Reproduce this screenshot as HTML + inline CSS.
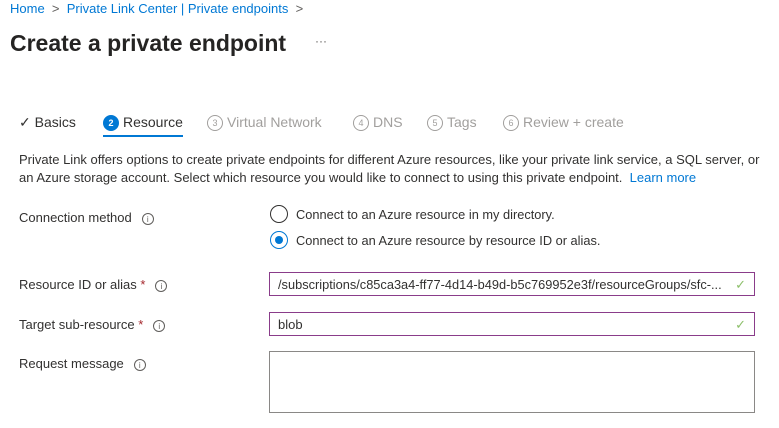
<!DOCTYPE html><html><head><style>
body{margin:0;width:779px;height:428px;background:#fff;font-family:"Liberation Sans",sans-serif;color:#323130;position:relative;overflow:hidden}
.a{position:absolute;white-space:nowrap}
.blue{color:#0078d4}
.g{color:#a19f9d}
.c{display:inline-block;width:16px;height:16px;border:1px solid #a19f9d;border-radius:50%;font-size:9px;text-align:center;line-height:15px;vertical-align:1px;margin-right:4px;box-sizing:border-box}
.i{display:inline-block;width:12px;height:12px;border:1px solid #605e5c;border-radius:50%;font-size:8px;text-align:center;line-height:11px;box-sizing:border-box;color:#605e5c;margin-left:10px;vertical-align:0}
.box{position:absolute;left:269px;width:486px;border:1px solid #8a3c8a;box-sizing:border-box;background:#fff}
.ck{position:absolute;right:8px;top:4px;color:#8cbf6a;font-size:13px}
.rad{position:absolute;width:18px;height:18px;border:1px solid #323130;border-radius:50%;box-sizing:border-box}
.req{color:#a4262c}
</style></head><body>
<div class="a blue" style="left:10px;top:1px;font-size:13px">Home <span style="color:#605e5c">&nbsp;&gt;&nbsp;</span> Private Link Center | Private endpoints <span style="color:#605e5c">&nbsp;&gt;</span></div>
<div class="a" style="left:10px;top:30px;font-size:23px;font-weight:bold;color:#252423">Create a private endpoint</div>
<div class="a" style="left:315px;top:34px;font-size:12px;color:#605e5c">···</div>
<div class="a" style="left:19px;top:114px;font-size:14px">✓ Basics</div>
<div class="a" style="left:103px;top:114px;font-size:14px"><span class="c" style="background:#0078d4;border-color:#0078d4;color:#fff;font-weight:bold">2</span>Resource</div>
<div class="a" style="left:103px;top:135px;width:80px;height:2px;background:#0078d4"></div>
<div class="a g" style="left:207px;top:114px;font-size:14px"><span class="c">3</span>Virtual Network</div>
<div class="a g" style="left:353px;top:114px;font-size:14px"><span class="c">4</span>DNS</div>
<div class="a g" style="left:427px;top:114px;font-size:14px"><span class="c">5</span>Tags</div>
<div class="a g" style="left:503px;top:114px;font-size:14px"><span class="c">6</span>Review + create</div>
<div class="a" style="left:19px;top:151px;font-size:13px;line-height:18px">Private Link offers options to create private endpoints for different Azure resources, like your private link service, a SQL server, or<br>an Azure storage account. Select which resource you would like to connect to using this private endpoint. &nbsp;<span class="blue">Learn more</span></div>
<div class="a" style="left:19px;top:210px;font-size:13px">Connection method<span class="i">i</span></div>
<div class="rad" style="left:270px;top:205px"></div>
<div class="a" style="left:296px;top:207px;font-size:12.8px">Connect to an Azure resource in my directory.</div>
<div class="rad" style="left:270px;top:231px;border-color:#0078d4"><div style="position:absolute;left:4px;top:4px;width:8px;height:8px;border-radius:50%;background:#0078d4"></div></div>
<div class="a" style="left:296px;top:233px;font-size:12.8px">Connect to an Azure resource by resource ID or alias.</div>
<div class="a" style="left:19px;top:277px;font-size:13px">Resource ID or alias <span class="req">*</span><span class="i">i</span></div>
<div class="box" style="top:272px;height:24px"><span class="a" style="left:8px;top:4px;font-size:12.8px">/subscriptions/c85ca3a4-ff77-4d14-b49d-b5c769952e3f/resourceGroups/sfc-...</span><span class="ck">✓</span></div>
<div class="a" style="left:19px;top:317px;font-size:13px">Target sub-resource <span class="req">*</span><span class="i">i</span></div>
<div class="box" style="top:312px;height:24px"><span class="a" style="left:8px;top:4px;font-size:13px">blob</span><span class="ck">✓</span></div>
<div class="a" style="left:19px;top:356px;font-size:13px">Request message<span class="i">i</span></div>
<div class="box" style="top:351px;height:62px;border-color:#8a8886"></div>
</body></html>
